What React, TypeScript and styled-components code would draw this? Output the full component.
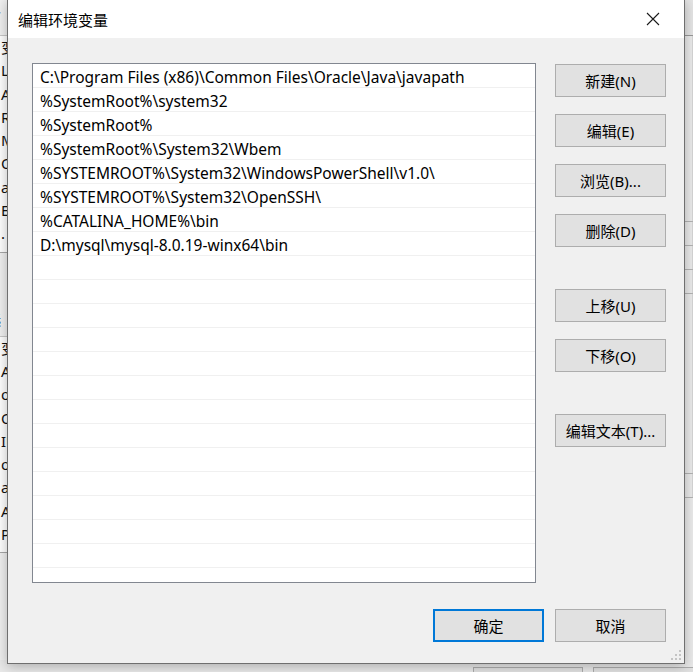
import styled, { createGlobalStyle } from 'styled-components';

const paths = [
  'C:\\Program Files (x86)\\Common Files\\Oracle\\Java\\javapath',
  '%SystemRoot%\\system32',
  '%SystemRoot%',
  '%SystemRoot%\\System32\\Wbem',
  '%SYSTEMROOT%\\System32\\WindowsPowerShell\\v1.0\\',
  '%SYSTEMROOT%\\System32\\OpenSSH\\',
  '%CATALINA_HOME%\\bin',
  'D:\\mysql\\mysql-8.0.19-winx64\\bin',
];

const ROWS = 22;

const sideButtons = [
  { label: '新建(N)', gapBefore: 0 },
  { label: '编辑(E)', gapBefore: 0 },
  { label: '浏览(B)...', gapBefore: 0 },
  { label: '删除(D)', gapBefore: 0 },
  { label: '上移(U)', gapBefore: 25 },
  { label: '下移(O)', gapBefore: 0 },
  { label: '编辑文本(T)...', gapBefore: 25 },
];

const leftTop = ['变', 'L', 'A', 'R', 'M', 'Or', 'a', 'E', '.'];
const leftBottom = ['变', 'A', 'o', 'Or', 'IU', 'oS', 'a', 'A', 'P'];

export default function App() {
  return (
    <>
      <GlobalStyle />
      <Desktop>
        <LeftWindow>
          <LeftHeader>ˇ</LeftHeader>
          <LeftList>
            {leftTop.map((t, i) => (
              <LeftRow key={i}>{t}</LeftRow>
            ))}
          </LeftList>
          <LeftGap />
          <LeftHeader>选</LeftHeader>
          <LeftList>
            {leftBottom.map((t, i) => (
              <LeftRow key={i}>{t}</LeftRow>
            ))}
          </LeftList>
        </LeftWindow>

        <RightWindow>
          <RightPane $h={186} />
          <RightPane $h={24} />
          <RightPane $h={24} />
          <RightPane $h={24} />
          <RightPane $h={180} />
          <RightPane $h={24} />
        </RightWindow>

        <BottomStrip>
          <BackButton style={{ left: 473 }} />
          <BackButton style={{ left: 593 }} />
        </BottomStrip>

        <Dialog>
          <TitleBar>
            <Title>编辑环境变量</Title>
            <CloseButton aria-label="关闭">
              <svg width="14" height="14" viewBox="0 0 14 14">
                <path d="M1 1 L13 13 M13 1 L1 13" stroke="#1a1a1a" strokeWidth="1.1" fill="none" />
              </svg>
            </CloseButton>
          </TitleBar>

          <Body>
            <List>
              {Array.from({ length: ROWS }).map((_, i) => (
                <Row key={i}>{paths[i] ?? ''}</Row>
              ))}
            </List>

            <SideColumn>
              {sideButtons.map((b) => (
                <Button key={b.label} $gapBefore={b.gapBefore}>
                  {b.label}
                </Button>
              ))}
            </SideColumn>
          </Body>

          <Footer>
            <Button $primary>确定</Button>
            <Button>取消</Button>
          </Footer>

          <Grip>
            <svg width="10" height="10" viewBox="0 0 10 10">
              <rect x="8" y="0" width="2" height="2" fill="#c4c4c4" />
              <rect x="4" y="4" width="2" height="2" fill="#c4c4c4" />
              <rect x="8" y="4" width="2" height="2" fill="#c4c4c4" />
              <rect x="0" y="8" width="2" height="2" fill="#c4c4c4" />
              <rect x="4" y="8" width="2" height="2" fill="#c4c4c4" />
              <rect x="8" y="8" width="2" height="2" fill="#c4c4c4" />
            </svg>
          </Grip>
        </Dialog>
      </Desktop>
    </>
  );
}

const GlobalStyle = createGlobalStyle`
  html, body {
    margin: 0;
    padding: 0;
    background: #e6e6e6;
  }
  * {
    box-sizing: border-box;
  }
  body {
    font-family: "Noto Sans", "Noto Sans CJK SC", sans-serif;
  }
`;

const Desktop = styled.div`
  position: relative;
  width: 693px;
  height: 672px;
  overflow: hidden;
  background: #e6e6e6;
`;

const LeftWindow = styled.div`
  position: absolute;
  left: -40px;
  top: 0;
  width: 56px;
  height: 672px;
  background: #f0f0f0;
  border-right: 1px solid #999;
  display: flex;
  flex-direction: column;
`;

const LeftHeader = styled.div`
  height: 36px;
  display: flex;
  align-items: center;
  justify-content: flex-end;
  padding-right: 14px;
  font-size: 15px;
  color: #222;
  background: #f0f0f0;
  border-bottom: 1px solid #c8c8c8;
`;

const LeftList = styled.div`
  background: #fff;
  border-bottom: 1px solid #a8a8a8;
  padding-bottom: 6px;
`;

const LeftRow = styled.div`
  height: 23.3px;
  line-height: 23px;
  font-size: 15px;
  color: #111;
  padding-left: 41px;
  white-space: nowrap;
`;

const LeftGap = styled.div`
  height: 48px;
  background: #f0f0f0;
`;

const RightWindow = styled.div`
  position: absolute;
  left: 680px;
  top: 35px;
  width: 30px;
  height: 640px;
  background: #ececec;
  border-top: 1px solid #9a9a9a;
  display: flex;
  flex-direction: column;
`;

const RightPane = styled.div<{ $h: number }>`
  height: ${(p) => p.$h}px;
  flex: none;
  border-bottom: 1px solid #b5b5b5;
  background: linear-gradient(90deg, #ececec 0 12px, #d6d6d6 12px 16px, #e4e4e4 16px);
`;

const BottomStrip = styled.div`
  position: absolute;
  left: 0;
  top: 660px;
  width: 693px;
  height: 12px;
  background: #e9e9e9;
`;

const BackButton = styled.div`
  position: absolute;
  top: 7px;
  width: 110px;
  height: 24px;
  border: 1px solid #adadad;
  background: #e1e1e1;
`;

const Dialog = styled.div`
  position: absolute;
  left: 7px;
  top: -1px;
  width: 678px;
  height: 665px;
  background: #f0f0f0;
  border: 1px solid #6f6f6f;
  box-shadow: 0 2px 12px rgba(0, 0, 0, 0.28);
  display: flex;
  flex-direction: column;
`;

const TitleBar = styled.div`
  height: 38px;
  flex: none;
  background: #fff;
  display: flex;
  align-items: center;
  justify-content: space-between;
  padding-left: 10px;
`;

const Title = styled.div`
  font-size: 15px;
  color: #000;
  margin-top: 1px;
`;

const CloseButton = styled.div`
  width: 46px;
  height: 38px;
  margin-right: 8px;
  display: flex;
  align-items: center;
  justify-content: center;
`;

const Body = styled.div`
  display: flex;
  align-items: flex-start;
  padding: 25px 18px 0 24px;
  gap: 19px;
`;

const List = styled.div`
  width: 504px;
  height: 520px;
  flex: none;
  background: #fff;
  border: 1px solid #828790;
  overflow: hidden;
`;

const Row = styled.div`
  height: 24px;
  padding-top: 2px;
  line-height: 22px;
  padding-left: 7px;
  font-size: 15.5px;
  color: #000;
  border-bottom: 1px solid #f0f0f0;
  white-space: nowrap;
`;

const SideColumn = styled.div`
  display: flex;
  flex-direction: column;
  gap: 17px;
  padding-top: 1px;
`;

const Button = styled.div<{ $primary?: boolean; $gapBefore?: number }>`
  width: 111px;
  height: 33px;
  flex: none;
  margin-top: ${(p) => p.$gapBefore ?? 0}px;
  display: flex;
  align-items: center;
  justify-content: center;
  font-size: 15px;
  color: #000;
  background: #e1e1e1;
  border: ${(p) => (p.$primary ? '2px solid #0078d7' : '1px solid #adadad')};
`;

const Footer = styled.div`
  display: flex;
  justify-content: flex-end;
  gap: 11px;
  padding: 26px 18px 0 0;
`;

const Grip = styled.div`
  position: absolute;
  right: 3px;
  bottom: 3px;
  width: 10px;
  height: 10px;
  display: flex;
`;
